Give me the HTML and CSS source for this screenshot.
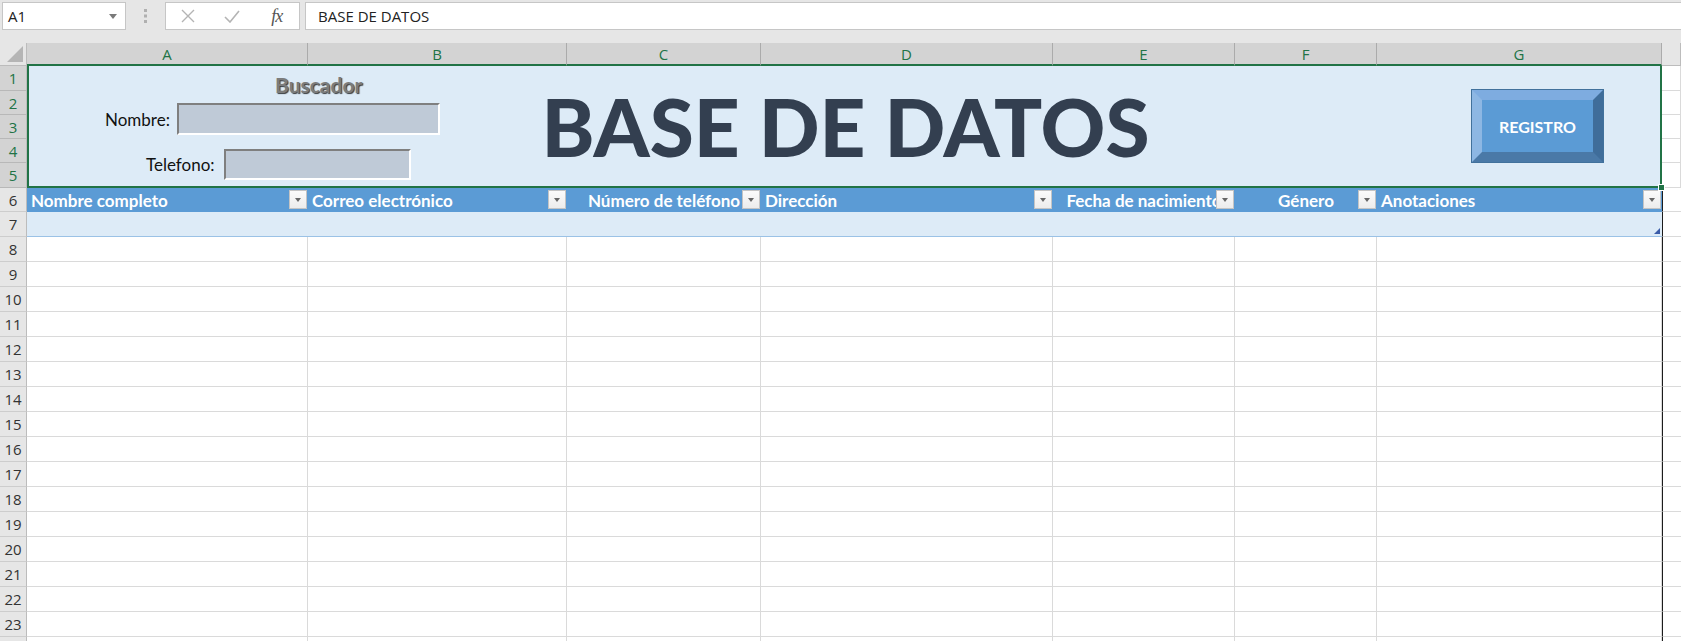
FILE: index.html
```html
<!DOCTYPE html>
<html lang="es">
<head>
  <meta charset="UTF-8">
  <title>BASE DE DATOS - Excel</title>
  <link rel="stylesheet" href="styles.css">
</head>
<body>
  <div class="formula-bar">
    <div class="name-box">
      <span>A1</span>
      <svg class="caret" width="8" height="5" viewBox="0 0 8 5"><path d="M0 0h8L4 5z" fill="#7a7a7a"/></svg>
    </div>
    <div class="grip">
      <svg width="3" height="14" viewBox="0 0 3 14"><rect x="0" y="0" width="3" height="3" fill="#b0b0b0"/><rect x="0" y="5.5" width="3" height="3" fill="#b0b0b0"/><rect x="0" y="11" width="3" height="3" fill="#b0b0b0"/></svg>
    </div>
    <div class="fx-buttons">
      <span class="fx-slot">
        <svg width="14" height="14" viewBox="0 0 14 14"><path d="M1 1l12 12M13 1L1 13" stroke="#b4b4b4" stroke-width="1.4" fill="none"/></svg>
      </span>
      <span class="fx-slot">
        <svg width="16" height="13" viewBox="0 0 16 13"><path d="M1 7l5 5L15 1" stroke="#b4b4b4" stroke-width="1.6" fill="none"/></svg>
      </span>
      <span class="fx-slot fx">fx</span>
    </div>
    <div class="formula-input">BASE DE DATOS</div>
  </div>

  <div class="sheet">
    <div class="corner"></div>
    <div class="ch sel">A</div>
    <div class="ch sel">B</div>
    <div class="ch sel">C</div>
    <div class="ch sel">D</div>
    <div class="ch sel">E</div>
    <div class="ch sel">F</div>
    <div class="ch sel">G</div>
    <div class="ch"></div>

    <!-- celda combinada A1:G5 -->
    <div class="banner">
      <div class="finder-title">Buscador</div>
      <div class="field field-name">
        <label>Nombre:</label>
        <div class="input input-name"></div>
      </div>
      <div class="field field-phone">
        <label>Telefono:</label>
        <div class="input input-phone"></div>
      </div>
      <h1 class="title">BASE DE DATOS</h1>
      <div class="btn-registro">REGISTRO</div>
      <span class="sel-handle"></span>
    </div>

    <div class="rh sel">1</div><div class="cell"></div>
    <div class="rh sel">2</div><div class="cell"></div>
    <div class="rh sel">3</div><div class="cell"></div>
    <div class="rh sel">4</div><div class="cell"></div>
    <div class="rh sel">5</div><div class="cell"></div>

    <div class="rh">6</div>
    <div class="th">Nombre completo<span class="filter"></span></div>
    <div class="th">Correo electrónico<span class="filter"></span></div>
    <div class="th center">Número de teléfono<span class="filter"></span></div>
    <div class="th">Dirección<span class="filter"></span></div>
    <div class="th center">Fecha de nacimiento<span class="filter"></span></div>
    <div class="th center">Género<span class="filter"></span></div>
    <div class="th">Anotaciones<span class="filter"></span></div>
    <div class="cell edge"></div>

    <div class="rh">7</div>
    <div class="band"></div>
    <div class="band"></div>
    <div class="band"></div>
    <div class="band"></div>
    <div class="band"></div>
    <div class="band"></div>
    <div class="band last"></div>
    <div class="cell edge"></div>
  </div>

  <script>
    // Filas vacías de la hoja (8 a 23, más el borde de la 24)
    const sheet = document.querySelector('.sheet');
    for (let r = 8; r <= 24; r++) {
      let row = '<div class="rh">' + (r < 24 ? r : '') + '</div>';
      for (let c = 0; c < 7; c++) {
        row += '<div class="cell"></div>';
      }
      row += '<div class="cell edge"></div>';
      sheet.insertAdjacentHTML('beforeend', row);
    }
  </script>
</body>
</html>
```

FILE: styles.css
```css
* {
  margin: 0;
  padding: 0;
  box-sizing: border-box;
}

body {
  width: 1681px;
  height: 641px;
  overflow: hidden;
  background: #fff;
  font-family: "Open Sans", "Noto Sans", sans-serif;
  color: #222;
}

/* Barra de fórmulas */
.formula-bar {
  height: 43px;
  background: #e6e6e6;
  display: flex;
  align-items: flex-start;
  padding-top: 2px;
}

.name-box {
  margin-left: 2px;
  width: 124px;
  height: 28px;
  background: #fff;
  border: 1px solid #c6c6c6;
  display: flex;
  align-items: center;
  padding-left: 5px;
  font-size: 15px;
}

.name-box .caret {
  margin-left: auto;
  margin-right: 8px;
}

.grip {
  width: 39px;
  height: 28px;
  display: flex;
  align-items: center;
  justify-content: center;
}

.fx-buttons {
  width: 135px;
  height: 28px;
  background: #fff;
  border: 1px solid #c6c6c6;
  display: flex;
}

.fx-slot {
  width: 45px;
  display: flex;
  align-items: center;
  justify-content: center;
}

.fx {
  font-family: "Liberation Serif", serif;
  font-style: italic;
  font-size: 18px;
  color: #555;
  letter-spacing: -1px;
}

.formula-input {
  margin-left: 5px;
  flex: 1;
  height: 28px;
  background: #fff;
  border: 1px solid #c6c6c6;
  border-right: none;
  display: flex;
  align-items: center;
  padding-left: 12px;
  font-size: 15px;
}

/* Hoja */
.sheet {
  display: grid;
  grid-template-columns: 27px 281px 259px 194px 292px 182px 142px 285px 1fr;
  grid-template-rows: 23px 25px 24px 24px 24px 25px 24px 25px repeat(17, 25px);
}

.corner {
  background: #e6e6e6;
  border-right: 1px solid #bcbcbc;
  border-bottom: 1px solid #bcbcbc;
  position: relative;
}

.corner::after {
  content: "";
  position: absolute;
  right: 3px;
  bottom: 3px;
  width: 16px;
  height: 16px;
  background: #b5b5b5;
  clip-path: polygon(100% 0, 100% 100%, 0 100%);
}

.ch {
  background: #e6e6e6;
  border-right: 1px solid #bcbcbc;
  border-bottom: 1px solid #bcbcbc;
  display: flex;
  align-items: center;
  justify-content: center;
  font-size: 15px;
  color: #444;
}

.ch.sel {
  background: #d3d3d3;
  color: #217346;
  border-right-color: #ababab;
  border-bottom: 2px solid #217346;
}

.rh {
  background: #e6e6e6;
  border-right: 1px solid #bcbcbc;
  border-bottom: 1px solid #cdcdcd;
  display: flex;
  align-items: center;
  justify-content: center;
  font-size: 15px;
  color: #333;
}

.rh.sel {
  background: #d3d3d3;
  color: #217346;
  border-bottom-color: #b8b8b8;
}

.cell {
  border-right: 1px solid #dadada;
  border-bottom: 1px solid #dadada;
}

.cell.edge {
  border-left: 1px solid #1c1c1c;
  border-right: none;
}

/* Encabezado del buscador */
.banner {
  grid-column: 2 / 9;
  grid-row: 2 / 7;
  background: #ddebf7;
  border: 2px solid #217346;
  border-top: none;
  position: relative;
  display: flex;
  align-items: center;
  justify-content: center;
  font-family: Lato, "Open Sans", sans-serif;
}

.finder-title {
  position: absolute;
  left: 246px;
  top: 6px;
  font-size: 21px;
  font-weight: 700;
  color: #7c7c7c;
  text-shadow: 1px 1px 1px rgba(0, 0, 0, 0.75);
}

.field {
  position: absolute;
  display: flex;
  align-items: center;
  gap: 7px;
  font-size: 17px;
  color: #111;
}

.field-name {
  left: 76px;
  top: 37px;
}

.field-phone {
  left: 117px;
  top: 83px;
  gap: 9px;
}

.input {
  background: #bfcad7;
  border-style: solid;
  border-width: 2px;
  border-color: #7f7f7f #fff #fff #7f7f7f;
}

.input-name {
  width: 263px;
  height: 32px;
}

.input-phone {
  width: 187px;
  height: 31px;
}

.title {
  font-size: 80px;
  font-weight: 900;
  line-height: 1;
  color: #333f50;
  letter-spacing: 0;
  margin-left: 2px;
}

.btn-registro {
  position: absolute;
  right: 57px;
  top: 24px;
  width: 131px;
  height: 72px;
  background: #5b9bd5;
  border-style: solid;
  border-width: 10px;
  border-color: #7eace0 #3f6d9a #4a79a7 #8db7e3;
  outline: 1px solid #41719c;
  display: flex;
  align-items: center;
  justify-content: center;
  color: #fff;
  font-size: 16px;
  font-weight: 700;
}

.sel-handle {
  position: absolute;
  right: -5px;
  bottom: -5px;
  width: 7px;
  height: 7px;
  background: #217346;
  border: 1px solid #fff;
  z-index: 2;
}

/* Tabla */
.th {
  background: #5b9bd5;
  color: #fff;
  font-family: Lato, "Open Sans", sans-serif;
  font-size: 17px;
  font-weight: 700;
  display: flex;
  align-items: center;
  padding-left: 4px;
  white-space: nowrap;
  overflow: hidden;
  position: relative;
}

.th.center {
  justify-content: center;
  padding-left: 0;
}

.filter {
  position: absolute;
  right: 1px;
  top: 2px;
  width: 18px;
  height: 19px;
  background: linear-gradient(#fbfbfb, #ececec);
  border: 1px solid #c4c4c4;
}

.filter::after {
  content: "";
  position: absolute;
  left: 5px;
  top: 7px;
  border-left: 3.5px solid transparent;
  border-right: 3.5px solid transparent;
  border-top: 4px solid #666;
}

.band {
  background: #ddebf7;
  border-bottom: 1px solid #9bc2e6;
}

.band.last {
  position: relative;
}

.band.last::after {
  content: "";
  position: absolute;
  right: 2px;
  bottom: 2px;
  width: 6px;
  height: 6px;
  background: #3b5ca8;
  clip-path: polygon(100% 0, 100% 100%, 0 100%);
}
```
